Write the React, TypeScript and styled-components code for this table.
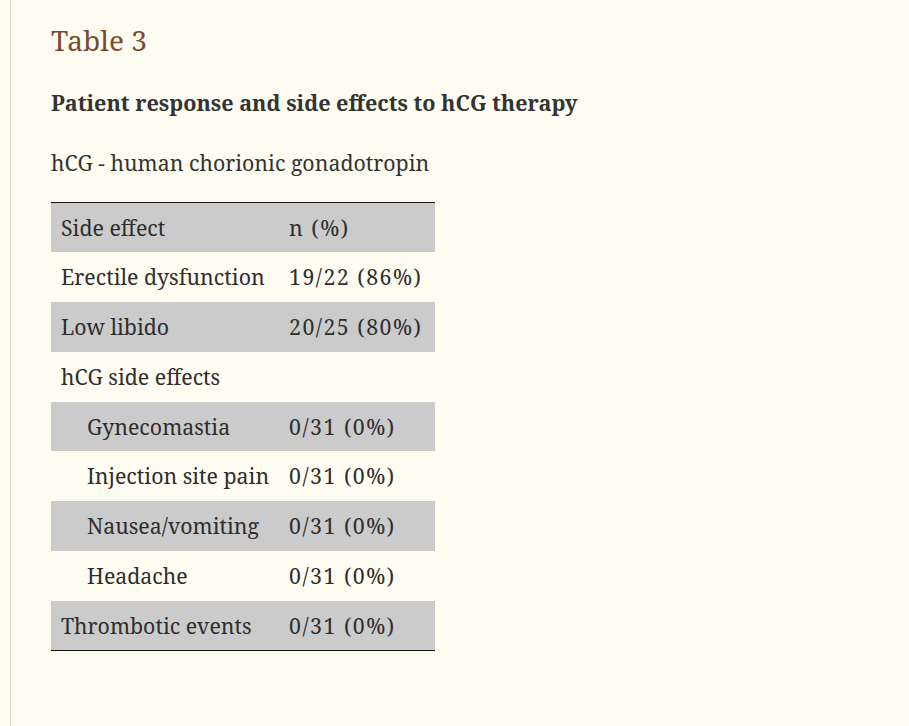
import React from "react";
import styled, { createGlobalStyle } from "styled-components";

const Global = createGlobalStyle`
  html, body { margin: 0; padding: 0; background: #fffdf1; }
  body { font-family: "Noto Serif", "DejaVu Serif", serif; color: #333; }
`;

const Page = styled.div`
  min-height: 726px;
  box-sizing: border-box;
  margin-left: 10px;
  border-left: 1px solid #ecd2c0;
  padding: 20px 0 0 40px;
`;

const Title = styled.h2`
  margin: 0;
  font-size: 28px;
  line-height: 40px;
  font-weight: 400;
  color: #7a4a2f;
`;

const Heading = styled.h3`
  margin: 28px 0 0;
  font-size: 21.6px;
  line-height: 30px;
  font-weight: 700;
  color: #333;
`;

const Caption = styled.p`
  margin: 30px 0 0;
  font-size: 21.3px;
  line-height: 30px;
  color: #333;
`;

const Table = styled.table`
  margin-top: 24px;
  border-collapse: collapse;
  table-layout: fixed;
  width: 384px;
  border-top: 1px solid #111;
  border-bottom: 1px solid #111;
  font-size: 21.3px;
  color: #2e2e2e;
`;

const Row = styled.tr<{ $shaded: boolean }>`
  background: ${(p) => (p.$shaded ? "#cbcbcb" : "transparent")};
`;

const Cell = styled.td<{ $indent?: boolean; $value?: boolean }>`
  height: 49.8px;
  box-sizing: border-box;
  padding: 0 0 0 ${(p) => (p.$indent ? 36 : 10)}px;
  line-height: 30px;
  white-space: nowrap;
  vertical-align: middle;
  letter-spacing: ${(p) => (p.$value ? "1.5px" : "0")};
`;

const rows: { a: string; b: string; indent?: boolean }[] = [
  { a: "Side effect", b: "n (%)" },
  { a: "Erectile dysfunction", b: "19/22 (86%)" },
  { a: "Low libido", b: "20/25 (80%)" },
  { a: "hCG side effects", b: "" },
  { a: "Gynecomastia", b: "0/31 (0%)", indent: true },
  { a: "Injection site pain", b: "0/31 (0%)", indent: true },
  { a: "Nausea/vomiting", b: "0/31 (0%)", indent: true },
  { a: "Headache", b: "0/31 (0%)", indent: true },
  { a: "Thrombotic events", b: "0/31 (0%)" },
];

export default function App() {
  return (
    <Page>
      <Global />
      <Title>Table 3</Title>
      <Heading>Patient response and side effects to hCG therapy</Heading>
      <Caption>hCG - human chorionic gonadotropin</Caption>
      <Table>
        <colgroup>
          <col style={{ width: 228 }} />
          <col style={{ width: 156 }} />
        </colgroup>
        <tbody>
          {rows.map((r, i) => (
            <Row key={r.a} $shaded={i % 2 === 0}>
              <Cell $indent={r.indent}>{r.a}</Cell>
              <Cell $value>{r.b}</Cell>
            </Row>
          ))}
        </tbody>
      </Table>
    </Page>
  );
}
